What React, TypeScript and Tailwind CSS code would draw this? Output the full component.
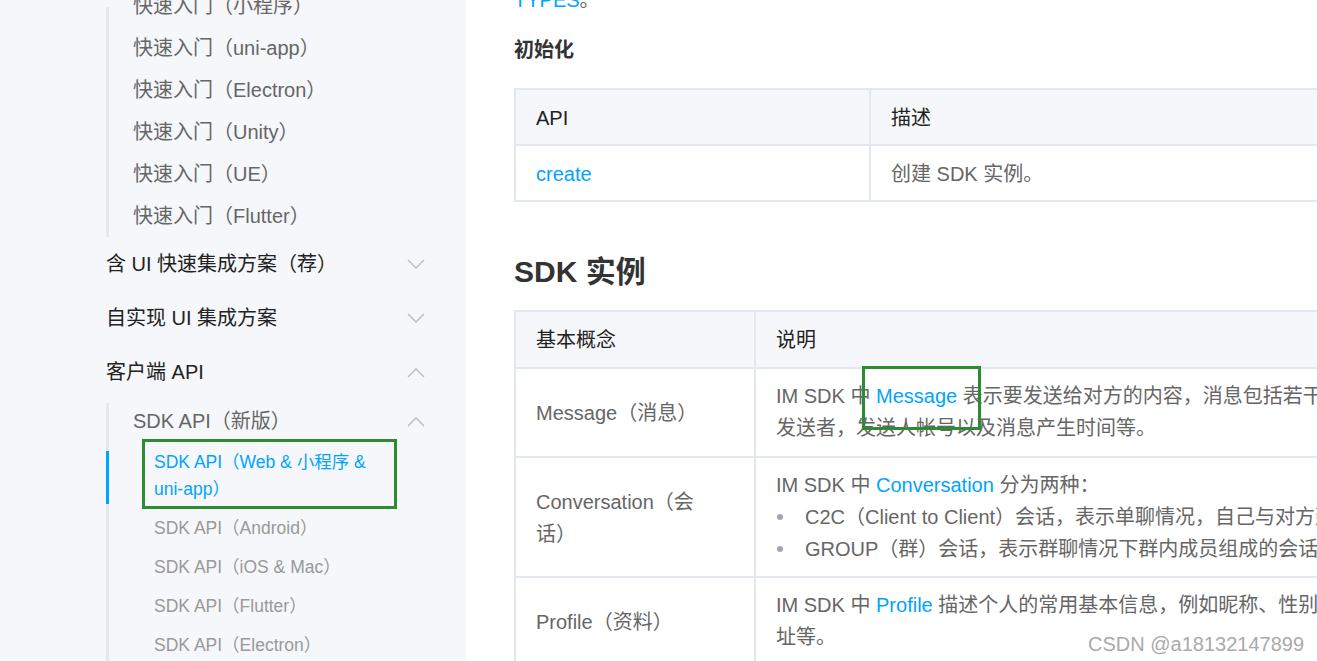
import React from "react";

const Chevron = ({ up = false }: { up?: boolean }) => (
  <svg width="18" height="11" viewBox="0 0 18 11" className="shrink-0">
    <polyline
      points={up ? "1,10 9,2 17,10" : "1,1 9,9 17,1"}
      fill="none"
      stroke="#b7bbc3"
      strokeWidth="1.3"
    />
  </svg>
);

const quick = [
  "快速入门（小程序）",
  "快速入门（uni-app）",
  "快速入门（Electron）",
  "快速入门（Unity）",
  "快速入门（UE）",
  "快速入门（Flutter）",
];

const subs = [
  "SDK API（Android）",
  "SDK API（iOS & Mac）",
  "SDK API（Flutter）",
  "SDK API（Electron）",
];

const Link = ({ children }: { children: React.ReactNode }) => (
  <span className="text-[#00a4ff]">{children}</span>
);

const Dot = () => (
  <span className="ml-[1px] mr-[22px] h-[6px] w-[6px] shrink-0 rounded-full bg-[#a0a8b8]" />
);

export default function App() {
  return (
    <div className="flex h-[661px] w-[1317px] overflow-hidden font-['Liberation_Sans','Noto_Sans_CJK_SC',sans-serif]">
      <aside className="w-[466px] shrink-0 overflow-hidden bg-[#f5f7fa]">
        <div className="ml-[106px] mt-[7px] flex flex-col border-l-[3px] border-[#e6e8ed]">
          <div className="-mt-[22px] flex flex-col">
            {quick.map((q) => (
              <div key={q} className="flex h-[42px] items-center pl-[24px] text-[20px] text-[#666]">
                {q}
              </div>
            ))}
          </div>
        </div>

        {[
          ["含 UI 快速集成方案（荐）", false],
          ["自实现 UI 集成方案", false],
          ["客户端 API", true],
        ].map(([t, up]) => (
          <div
            key={t as string}
            className="flex h-[54px] items-center justify-between pl-[106px] pr-[41px] text-[20px] text-[#222]"
          >
            <span>{t as string}</span>
            <Chevron up={up as boolean} />
          </div>
        ))}

        <div className="ml-[106px] mt-[4px] flex flex-col border-l-[3px] border-[#e6e8ed]">
          <div className="flex h-[36px] items-center justify-between pl-[24px] pr-[41px] text-[20px] text-[#666]">
            <span>SDK API（新版）</span>
            <Chevron up />
          </div>
          <div className="relative pl-[33px]">
            <div className="absolute left-[-3px] top-[12px] h-[53px] w-[3px] bg-[#00a4ff]" />
            <div className="w-[255px] border-[3px] border-[#2f8a34] pb-[3px] pl-[9px] pt-[7px] text-[17.5px] leading-[27px] text-[#00a4ff]">
              SDK API（Web &amp; 小程序 &amp;
              <br />
              uni-app）
            </div>
          </div>
          {subs.map((s) => (
            <div key={s} className="flex h-[39px] items-center pl-[45px] text-[17.5px] text-[#999]">
              {s}
            </div>
          ))}
        </div>
      </aside>

      <main className="relative min-w-0 flex-1 overflow-hidden bg-white">
        <div className="-mt-[16px] pl-[48px] text-[20px] leading-[32px] text-[#666]">
          <p>
            <Link>TYPES</Link>。
          </p>
          <h3 className="mt-[18px] text-[20px] font-bold leading-[32px] text-[#333]">初始化</h3>

          <table className="mt-[22px] w-[1000px] border-collapse">
            <colgroup>
              <col className="w-[355px]" />
              <col />
            </colgroup>
            <tbody>
              <tr className="bg-[#f5f7fa] text-[#222]">
                <td className="border-2 border-[#e3e7ef] px-[20px] pb-[10px] pt-[12px]">API</td>
                <td className="border-2 border-[#e3e7ef] px-[20px] pb-[10px] pt-[12px]">描述</td>
              </tr>
              <tr>
                <td className="border-2 border-[#e3e7ef] px-[20px] pb-[10px] pt-[12px]">
                  <Link>create</Link>
                </td>
                <td className="border-2 border-[#e3e7ef] px-[20px] pb-[10px] pt-[12px]">创建 SDK 实例。</td>
              </tr>
            </tbody>
          </table>

          <h2 className="mt-[50px] text-[30px] font-bold leading-[40px] text-[#333]">SDK 实例</h2>

          <table className="mt-[18px] w-[1100px] border-collapse">
            <colgroup>
              <col className="w-[240px]" />
              <col />
            </colgroup>
            <tbody>
              <tr className="bg-[#f5f7fa] text-[#222]">
                <td className="border-2 border-[#e3e7ef] px-[20px] pb-[11px] pt-[12px]">基本概念</td>
                <td className="border-2 border-[#e3e7ef] px-[20px] pb-[11px] pt-[12px]">说明</td>
              </tr>
              <tr>
                <td className="border-2 border-[#e3e7ef] px-[20px] pb-[11px] pt-[12px] align-middle">
                  Message（消息）
                </td>
                <td className="border-2 border-[#e3e7ef] px-[20px] pb-[12px] pt-[11px] align-top">
                  <div className="whitespace-nowrap">
                    IM SDK 中 <Link>Message</Link> 表示要发送给对方的内容，消息包括若干属性，例如自己是否为
                  </div>
                  <div className="whitespace-nowrap">发送者，发送人帐号以及消息产生时间等。</div>
                </td>
              </tr>
              <tr>
                <td className="border-2 border-[#e3e7ef] px-[20px] pb-[11px] pt-[12px] align-middle">
                  Conversation（会
                  <br />
                  话）
                </td>
                <td className="border-2 border-[#e3e7ef] px-[20px] pb-[11px] pt-[11px] align-top">
                  <div className="whitespace-nowrap">
                    IM SDK 中 <Link>Conversation</Link> 分为两种：
                  </div>
                  <ul>
                    <li className="flex items-center whitespace-nowrap">
                      <Dot />
                      C2C（Client to Client）会话，表示单聊情况，自己与对方建立的对话。
                    </li>
                    <li className="flex items-center whitespace-nowrap">
                      <Dot />
                      GROUP（群）会话，表示群聊情况下群内成员组成的会话。
                    </li>
                  </ul>
                </td>
              </tr>
              <tr>
                <td className="border-2 border-[#e3e7ef] px-[20px] pb-[11px] pt-[12px] align-middle">
                  Profile（资料）
                </td>
                <td className="border-2 border-[#e3e7ef] px-[20px] pb-[12px] pt-[11px] align-top">
                  <div className="whitespace-nowrap">
                    IM SDK 中 <Link>Profile</Link> 描述个人的常用基本信息，例如昵称、性别、个性签名、头像地
                  </div>
                  <div className="whitespace-nowrap">址等。</div>
                </td>
              </tr>
            </tbody>
          </table>
        </div>

        <div className="absolute left-[396px] top-[366px] h-[64px] w-[119px] border-[3px] border-[#2f8a34]" />
        <div className="absolute left-[622px] top-[632px] whitespace-nowrap text-[20px] leading-[24px] text-[#aaa]">
          CSDN @a18132147899
        </div>
      </main>
    </div>
  );
}
